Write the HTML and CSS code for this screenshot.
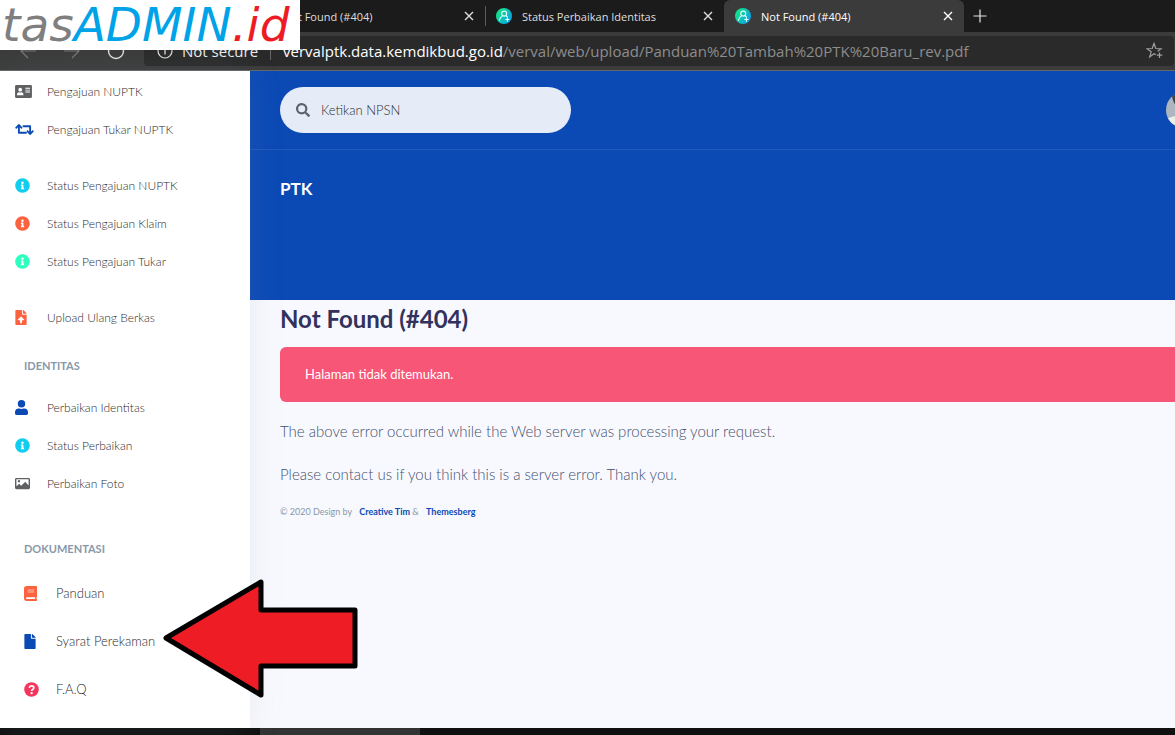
FILE: index.html
```html
<!DOCTYPE html>
<html lang="id">
<head>
<meta charset="utf-8">
<title>Not Found (#404)</title>
<link rel="stylesheet" href="styles.css">
</head>
<body>
<svg class="defs" aria-hidden="true">
  <defs>
    <linearGradient id="fav" x1="0" y1="0.2" x2="1" y2="0.8"><stop offset="0.15" stop-color="#0fe08f"/><stop offset="1" stop-color="#0a9cf0"/></linearGradient>
    <symbol id="i-fav" viewBox="0 0 16 16"><circle cx="8" cy="8" r="8" fill="url(#fav)"/><g fill="none" stroke="#e8fffa" stroke-width="1.1" stroke-linecap="round"><circle cx="8.200" cy="5.600" r="2.500"/><path d="M3.400 12.400C4 9.800 5 8.600 6.600 7.800M9.800 7.700l1.400 1.100M11.400 9.800v3.400M9.700 11.500h3.400"/></g></symbol>
    <symbol id="i-close" viewBox="0 0 10 10"><path d="M1 1l8 8M9 1 1 9" stroke="currentColor" stroke-width="1.4" fill="none"/></symbol>
    <symbol id="i-info" viewBox="0 0 512 512"><path fill="currentColor" d="M256 8C119 8 8 119 8 256s111 248 248 248 248-111 248-248S393 8 256 8zm0 110a42 42 0 1 1 0 84 42 42 0 0 1 0-84zm56 254a12 12 0 0 1-12 12h-88a12 12 0 0 1-12-12v-24a12 12 0 0 1 12-12h12v-64h-12a12 12 0 0 1-12-12v-24a12 12 0 0 1 12-12h64a12 12 0 0 1 12 12v100h12a12 12 0 0 1 12 12z"/></symbol>
  </defs>
</svg>

<header class="browser">
  <div class="tabs">
    <div class="tab"><svg class="fav"><use href="#i-fav"/></svg><span class="tab-title">Not Found (#404)</span><button class="close" aria-label="Close tab"><svg><use href="#i-close"/></svg></button></div>
    <div class="tab tab-divided"><svg class="fav"><use href="#i-fav"/></svg><span class="tab-title">Status Perbaikan Identitas</span><button class="close" aria-label="Close tab"><svg><use href="#i-close"/></svg></button></div>
    <div class="tab tab-active"><svg class="fav"><use href="#i-fav"/></svg><span class="tab-title">Not Found (#404)</span><button class="close" aria-label="Close tab"><svg><use href="#i-close"/></svg></button></div>
    <button class="new-tab" aria-label="New tab"><svg viewBox="0 0 14 14"><path d="M7 0.5v13M0.5 7h13" stroke="#e4e4e4" stroke-width="1.2"/></svg></button>
  </div>
  <div class="toolbar">
    <div class="nav">
      <button aria-label="Back"><svg viewBox="0 0 18 18"><path d="M17 9H2M9 2 2 9l7 7" fill="none" stroke="#777" stroke-width="1.2"/></svg></button>
      <button aria-label="Forward"><svg viewBox="0 0 18 18"><path d="M1 9h15M9 2l7 7-7 7" fill="none" stroke="#777" stroke-width="1.2"/></svg></button>
      <button aria-label="Reload"><svg viewBox="0 0 18 18"><circle cx="9" cy="9" r="7.5" fill="none" stroke="#ddd" stroke-width="1.4"/></svg></button>
    </div>
    <div class="address">
      <svg class="secure-icon" viewBox="0 0 16 16"><circle cx="8" cy="8" r="7" fill="none" stroke="#ddd" stroke-width="1.2"/><path d="M8 7v4.500M8 4v1.500" stroke="#ddd" stroke-width="1.3"/></svg>
      <span class="secure">Not secure</span>
      <span class="url"><b>vervalptk.data.kemdikbud.go.id</b>/verval/web/upload/Panduan%20Tambah%20PTK%20Baru_rev.pdf</span>
      <button class="star" aria-label="Add to favorites"><svg viewBox="0 0 18 18"><path d="M9.800 12.800 8 11.800 3.700 15l1.500-5.200L1 6.700l5.200-.2L8 1.400l1.800 5.100 5.200.2-3.300 2.600" fill="none" stroke="#a0a0a0" stroke-width="1.200"/><path d="M13.500 10.500v5.500M10.800 13.200h5.500" stroke="#a0a0a0" stroke-width="1.200"/></svg></button>
    </div>
  </div>
</header>

<div class="page">
  <nav class="sidebar">
    <ul class="group">
      <li><a href="#"><svg class="ico wide gray" viewBox="0 0 576 512"><path fill="currentColor" d="M528 32H48a48 48 0 0 0-48 48v352a48 48 0 0 0 48 48h480a48 48 0 0 0 48-48V80a48 48 0 0 0-48-48z"/><path fill="#fff" d="M176 128a64 64 0 1 1 0 128 64 64 0 0 1 0-128zM64 365c0-55 35-86 67-86 30 12 60 12 90 0 32 0 67 31 67 86 0 10-8 19-19 19H83c-11 0-19-9-19-19zM352 128h160v32H352zM352 192h160v32H352zM352 256h160v32H352z"/></svg>Pengajuan NUPTK</a></li>
      <li><a href="#"><svg class="ico retweet blue" viewBox="0 0 640 512"><path fill="currentColor" d="M630 337 529 438c-9 10-25 10-34 0L394 337c-9-9-9-24 0-34l11-11c10-9 25-9 35 1l40 42V176H292a24 24 0 0 1-17-7l-16-16c-15-15-4-41 17-41h236a32 32 0 0 1 32 32v191l40-42c10-10 25-10 35-1l11 11c9 10 9 25 0 34zM381 343a24 24 0 0 0-17-7H160V177l40 42c10 10 25 10 35 1l11-11c9-10 9-25 0-34L145 74c-9-10-25-10-34 0L10 175c-9 9-9 24 0 34l11 11c10 9 25 9 35-1l40-42v191a32 32 0 0 0 32 32h252c21 0 32-26 17-41z"/></svg>Pengajuan Tukar NUPTK</a></li>
    </ul>
    <ul class="group spaced">
      <li><a href="#"><svg class="ico cyan"><use href="#i-info"/></svg>Status Pengajuan NUPTK</a></li>
      <li><a href="#"><svg class="ico orange"><use href="#i-info"/></svg>Status Pengajuan Klaim</a></li>
      <li><a href="#"><svg class="ico green"><use href="#i-info"/></svg>Status Pengajuan Tukar</a></li>
    </ul>
    <ul class="group spaced">
      <li><a href="#"><svg class="ico narrow orange" viewBox="0 0 384 512"><path fill="currentColor" d="M224 136V0H24A24 24 0 0 0 0 24v464a24 24 0 0 0 24 24h336a24 24 0 0 0 24-24V160H248a24 24 0 0 1-24-24zm65 216h-65v80a16 16 0 0 1-16 16h-32a16 16 0 0 1-16-16v-80H95c-14 0-21-17-11-27l96-96c7-7 17-7 24 0l96 96c10 10 3 27-11 27zM377 105 279 7a24 24 0 0 0-17-7h-6v128h128v-6a24 24 0 0 0-7-17z"/></svg>Upload Ulang Berkas</a></li>
    </ul>
    <h2 class="side-title">IDENTITAS</h2>
    <ul class="group">
      <li><a href="#"><svg class="ico person blue" viewBox="0 0 448 512"><path fill="currentColor" d="M224 256a128 128 0 1 0 0-256 128 128 0 0 0 0 256zm90 32h-17a174 174 0 0 1-146 0h-17A134 134 0 0 0 0 422v42a48 48 0 0 0 48 48h352a48 48 0 0 0 48-48v-42a134 134 0 0 0-134-134z"/></svg>Perbaikan Identitas</a></li>
      <li><a href="#"><svg class="ico cyan"><use href="#i-info"/></svg>Status Perbaikan</a></li>
      <li><a href="#"><svg class="ico gray" viewBox="0 0 512 512"><path fill="currentColor" fill-rule="evenodd" d="M464 64H48a48 48 0 0 0-48 48v288a48 48 0 0 0 48 48h416a48 48 0 0 0 48-48V112a48 48 0 0 0-48-48zM54 112h404a6 6 0 0 1 6 6v202L352 192 210 334l-66-66-96 84V118a6 6 0 0 1 6-6zm82 24a40 40 0 1 0 0 80 40 40 0 0 0 0-80z"/></svg>Perbaikan Foto</a></li>
    </ul>
    <h2 class="side-title lower">DOKUMENTASI</h2>
    <ul class="group docs">
      <li><a href="#"><svg class="ico person orange" viewBox="0 0 448 512"><path fill="currentColor" d="M448 360V24a24 24 0 0 0-24-24H96A96 96 0 0 0 0 96v320a96 96 0 0 0 96 96h328a24 24 0 0 0 24-24v-16c0-8-3-14-9-18-4-15-4-59 0-74 6-5 9-12 9-20z"/><path fill="#fff" d="M384 448H96c-43 0-43-64 0-64h288z"/><path fill="#ffc0b0" d="M128 122h218v34H128zM128 186h218v34H128z"/></svg>Panduan</a></li>
      <li><a href="#"><svg class="ico narrow blue" viewBox="0 0 384 512"><path fill="currentColor" d="M224 136V0H24A24 24 0 0 0 0 24v464a24 24 0 0 0 24 24h336a24 24 0 0 0 24-24V160H248a24 24 0 0 1-24-24zM384 122v6H256V0h6a24 24 0 0 1 17 7l98 98a24 24 0 0 1 7 17z"/></svg>Syarat Perekaman</a></li>
      <li><a href="#"><svg class="ico red" viewBox="0 0 512 512"><circle cx="256" cy="256" r="248" fill="currentColor"/><path d="M178 198c8-42 36-64 80-64 46 0 78 28 78 66 0 54-76 50-76 104" fill="none" stroke="#fff" stroke-width="58"/><circle cx="260" cy="378" r="40" fill="#fff"/></svg>F.A.Q</a></li>
    </ul>
  </nav>

  <main class="main">
    <section class="banner">
      <div class="topbar">
        <label class="search"><svg viewBox="0 0 512 512"><path fill="#5b6270" fill-rule="evenodd" d="M505 443 405 343a24 24 0 0 0-17-7h-16a208 208 0 1 0-36 36v16c0 6 3 12 7 17l100 100c9 9 24 9 34 0l28-28c9-10 9-25 0-34zM208 336a128 128 0 1 1 0-256 128 128 0 0 1 0 256z"/></svg><input type="text" placeholder="Ketikan NPSN" aria-label="Ketikan NPSN"></label>
        <svg class="avatar" viewBox="0 0 36 36"><circle cx="18" cy="18" r="18" fill="#adb5bf"/><path d="M6 4.500a18 18 0 0 1 24 0V18H12C10 14 7 10 6 4.500z" fill="#444"/><path d="M2 26.500c3-2 6-2 9-2.500h23a18 18 0 0 1-32 2.500z" fill="#eeeee8"/></svg>
      </div>
      <h1 class="crumb">PTK</h1>
    </section>
    <section class="content">
      <h2 class="error-title">Not Found (#404)</h2>
      <div class="alert">Halaman tidak ditemukan.</div>
      <p>The above error occurred while the Web server was processing your request.</p>
      <p>Please contact us if you think this is a server error. Thank you.</p>
      <footer class="footer">© 2020 Design by <a href="#">Creative Tim</a> &amp; <a href="#">Themesberg</a></footer>
    </section>
  </main>
</div>
<div class="taskbar"><div class="task"></div></div>

<div class="watermark"><span class="w-gray">tas</span><span class="w-blue">ADMIN</span><span class="w-red">.id</span></div>
<svg class="arrow" viewBox="0 0 196 120"><path d="M3 60 98 4v28h94v56H98v29z" fill="#ee1c24" stroke="#000" stroke-width="5" stroke-linejoin="round"/></svg>
</body>
</html>
```
FILE: styles.css
```css
* { box-sizing: border-box; }
body {
  margin: 0;
  min-height: 100vh;
  display: flex;
  flex-direction: column;
  position: relative;
  overflow: hidden;
  background: #f8f9fe;
  font-family: Lato, "Open Sans", sans-serif;
  font-weight: 300;
  color: #44506e;
}
button { border: 0; padding: 0; background: none; display: flex; }
ul { list-style: none; margin: 0; padding: 0; }
a { text-decoration: none; }
.defs { position: absolute; width: 0; height: 0; }

.browser {
  background: #3b3b3b;
  border-bottom: 1px solid #666;
  font-family: "Open Sans", sans-serif;
  font-weight: 400;
}
.tabs { display: flex; height: 32px; padding-left: 246px; background: #1b1b1b; }
.tab {
  width: 239px;
  display: flex;
  align-items: center;
  padding: 0 11px;
  color: #dedede;
  font-size: 11px;
}
.tab-divided { background: linear-gradient(#5a5a5a, #5a5a5a) 0 6px / 1px 20px no-repeat; }
.tab-active { width: 240px; background: #3b3b3b; color: #fff; border-radius: 6px 6px 0 0; }
.fav { width: 16px; height: 16px; margin-right: 10px; }
.tab-title { flex: 1; white-space: nowrap; }
.close { color: inherit; }
.close svg { width: 10px; height: 10px; }
.new-tab { align-self: center; margin-left: 9px; }
.new-tab svg { width: 14px; height: 14px; }
.toolbar { display: flex; padding: 4px 1px 4px 0; }
.nav { width: 144px; display: flex; gap: 26px; align-items: center; padding-left: 19px; }
.nav svg { width: 18px; height: 18px; }
.address {
  flex: 1;
  height: 30px;
  display: flex;
  align-items: center;
  padding: 0 10px 0 13px;
  background: #2a2a2a;
  border-radius: 4px;
  color: #8d8d8d;
  font-size: 15px;
  white-space: nowrap;
}
.secure-icon { width: 16px; height: 16px; margin-right: 9px; }
.secure { color: #ececec; padding-right: 12px; border-right: 1px solid #666; line-height: 18px; margin-right: 12px; }
.url { flex: 1; }
.url b { font-weight: 400; color: #fff; }
.star svg { width: 18px; height: 18px; }

.page { flex: 1; display: flex; }
.sidebar {
  width: 250px;
  flex: none;
  padding-top: 1px;
  background: #fff;
  box-shadow: 0 0 32px rgba(136, 152, 170, 0.15);
  z-index: 1;
}
.group a {
  display: flex;
  align-items: center;
  height: 38px;
  padding-left: 15px;
  color: #2c2c2c;
  font-size: 12px;
}
.group.spaced { margin-top: 18px; }
.group.docs a { height: 48px; padding-left: 24px; font-size: 13px; }
.ico { width: 15px; height: 15px; margin-right: 17px; flex: none; }
.ico.wide { width: 17px; margin-right: 15px; }
.ico.retweet { width: 19px; margin-right: 13px; }
.ico.narrow { width: 12px; margin-right: 20px; }
.ico.person { width: 13px; margin-right: 19px; }
.gray { color: #5f6062; }
.blue { color: #0b49b5; }
.cyan { color: #11cdef; }
.orange { color: #fb6340; }
.green { color: #2dffc0; }
.red { color: #f5365c; }
.side-title {
  margin: 0;
  padding: 22px 24px 14px;
  font-size: 11px;
  line-height: 16px;
  font-weight: 700;
  color: #8898aa;
}
.side-title.lower { padding-top: 39px; padding-bottom: 12px; }

.main { flex: 1; min-width: 0; }
.banner { height: 229px; background: #0b49b5; }
.topbar {
  display: flex;
  justify-content: space-between;
  padding: 16px 0 16px 30px;
  border-bottom: 1px solid #2159bb;
}
.search {
  width: 291px;
  height: 46px;
  display: flex;
  align-items: center;
  gap: 11px;
  padding: 0 16px;
  border-radius: 23px;
  background: #e6ecf7;
}
.search svg { width: 14px; height: 14px; flex: none; }
.search input {
  flex: 1;
  min-width: 0;
  border: 0;
  padding: 0;
  outline: 0;
  background: none;
  font: 300 13px Lato, sans-serif;
  color: #2c2c2c;
}
.search input::placeholder { color: #2c2c2c; opacity: 1; }
.avatar { width: 36px; height: 36px; margin: 5px -27px 0 0; }
.crumb { margin: 0; padding: 27px 30px; font-size: 17px; line-height: 24px; font-weight: 700; color: #fff; }
.content { padding-left: 30px; }
.error-title { margin: 0; padding: 4px 0 13px; font-size: 24px; line-height: 30px; font-weight: 700; color: #32325d; }
.alert {
  height: 55px;
  margin-bottom: 17px;
  padding: 0 25px;
  border-radius: 6px 0 0 6px;
  background: #f75676;
  color: #fff;
  font-size: 13px;
  line-height: 55px;
  font-weight: 400;
}
.content p { margin: 0 0 18px; font-size: 15px; line-height: 25px; }
.footer { font-size: 9px; line-height: 14px; font-weight: 400; color: #8898aa; }
.footer a { margin-left: 5px; font-weight: 700; color: #0b49b5; }

.taskbar { height: 7px; background: #101010; padding-left: 260px; }
.task { width: 160px; height: 7px; background: #333; }

.watermark {
  position: absolute;
  top: 0;
  left: 0;
  width: 300px;
  height: 50px;
  padding-left: 2px;
  background: #fff;
  font: italic 400 47px/50px "DejaVu Sans", sans-serif;
  white-space: nowrap;
  z-index: 2;
}
.w-gray { color: #7f7f7f; }
.w-blue { color: #00a2e8; }
.w-red { color: #ed1c24; }
.arrow { position: absolute; left: 163px; top: 578px; width: 196px; height: 120px; z-index: 3; }
```
